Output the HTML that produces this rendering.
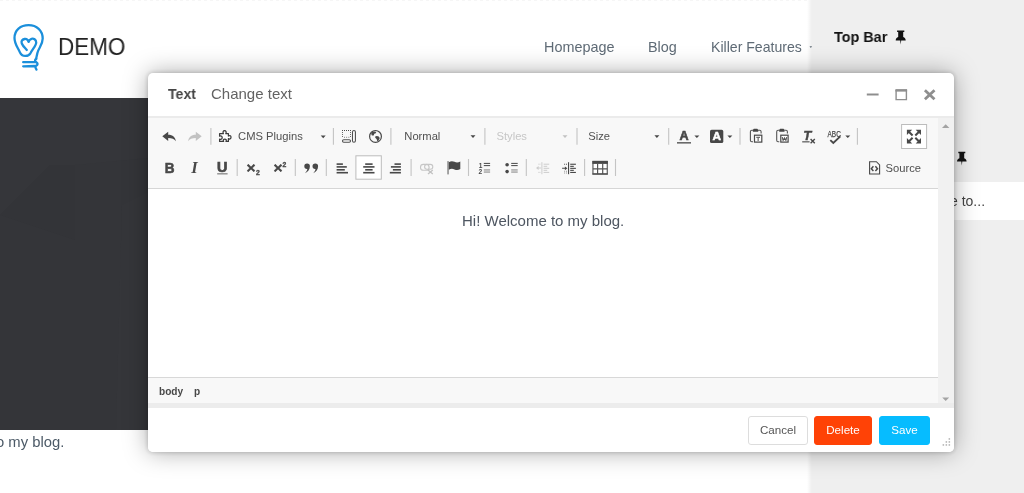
<!DOCTYPE html>
<html lang="en">
<head>
<meta charset="utf-8">
<title>DEMO - Change text</title>
<style>
*{box-sizing:border-box;margin:0;padding:0}
html,body{width:1024px;height:493px;overflow:hidden;background:#fff}
body{position:relative;font-family:"Liberation Sans",sans-serif;color:#333}
.abs{position:absolute}
#ov,.t,.btn{will-change:transform}
.t{position:absolute;white-space:nowrap;line-height:1;transform-origin:0 0}
/* page behind */
#hero{left:0;top:98px;width:811px;height:332px;background:#343539}
#side{left:811.500px;top:0;width:212.500px;height:493px;background:#efefef}
#sideshadow{left:807px;top:0;width:4.500px;height:493px;background:linear-gradient(to right,rgba(0,0,0,0),rgba(0,0,0,.065))}
#siderow{left:811.500px;top:182px;width:212.500px;height:38px;background:#fff}
.nav{font-size:14px;color:#5f6b76}
/* modal */
#modal{left:148px;top:73px;width:806px;height:379px;background:#fff;border-radius:5px;box-shadow:0 0 5px rgba(0,0,0,.22),0 0 24px rgba(0,0,0,.34)}
#mhead{left:0;top:0;width:806px;height:45px;border-bottom:2px solid #ebebeb}
#tb{left:0;top:45px;width:790px;height:71px;background:#f8f8f8;border-bottom:1.400px solid #d6d6d6}
#sb{left:790px;top:45px;width:16px;height:290.400px;background:#f1f1f1}
#path{left:0;top:304px;width:790px;height:26.4px;background:#f8f8f8;border-top:1px solid #d8d8d8}
#strip{left:0;top:330.400px;width:806px;height:5px;background:#ececec}
#mfoot{left:0;top:335.400px;width:806px;height:43.600px;border-top:0 solid #ddd;background:#fff;border-radius:0 0 5px 5px}
.sep{position:absolute;width:1px;height:16px;background:#bcbcbc}
.btn{position:absolute;height:28.500px;top:7.300px;border-radius:3px;font-size:11.6px;line-height:26.5px;text-align:center}
.cb{font-size:12px;color:#484848}
.ic{position:absolute;width:16px;height:16px;overflow:visible}
.arr{position:absolute;width:0;height:0;border-left:3px solid transparent;border-right:3px solid transparent;border-top:3px solid #484848}
</style>
</head>
<body>
<!-- page header -->
<div class="t" id="demo" style="left:58.400px;top:35px;font-size:24px;color:#222;transform:scaleX(.937)">DEMO</div>
<div class="t nav" id="n1" style="left:544.200px;top:39.800px;font-size:14.400px">Homepage</div>
<div class="t nav" id="n2" style="left:647.700px;top:39.800px;font-size:14.400px">Blog</div>
<div class="t nav" id="n3" style="left:710.800px;top:40px;font-size:14.100px">Killer Features</div>
<div class="abs" id="topdash" style="left:0;top:0;width:808px;height:1px;background:repeating-linear-gradient(to right,#f6f6f6 0 3px,#fff 3px 6px)"></div>
<div class="abs" id="hero"><svg width="811" height="332" viewBox="0 98 811 332" style="display:block"><path d="M0 98H148V158L75 165L50 165L0 215Z" fill="#35363a"/><path d="M50 165H75V240L0 215Z" fill="#333438"/><path d="M122 205L148 192V430H116Z" fill="#35363a"/></svg></div>
<div class="t" id="under" style="left:-3.9px;top:434.5px;font-size:14.8px;color:#4c5a67">o my blog.</div>

<!-- sidebar -->
<div class="abs" id="sideshadow"></div>
<div class="abs" id="side"></div>
<div class="abs" id="siderow"></div>
<div class="t" id="topbar" style="left:834px;top:28.500px;font-size:15px;transform:scaleX(.96);font-weight:bold;color:#111">Top Bar</div>
<div class="t" id="eto" style="left:950px;top:194px;font-size:14px;color:#444">e to...</div>

<!-- modal -->
<div class="abs" id="modal">
 <div class="abs" id="mhead"></div>
 <div class="t" id="mt1" style="left:20px;top:13px;font-size:15px;transform:scaleX(.94);font-weight:bold;color:#454545">Text</div>
 <div class="t" id="mt2" style="left:63px;top:13px;font-size:15px;color:#636363">Change text</div>
 <div class="abs" id="tb"></div>
 <div class="abs" id="sb"></div>
 <div class="t" id="hi" style="left:313.500px;top:139.600px;font-size:15px;color:#4e5661">Hi! Welcome to my blog.</div>
 <div class="abs" id="path"></div>
 <div class="abs" id="strip"></div>
 <div class="t" id="pb" style="left:11px;top:313.800px;font-size:10.1px;font-weight:bold;color:#484848">body</div>
 <div class="t" id="pp" style="left:45.600px;top:313.800px;font-size:10.1px;font-weight:bold;color:#484848">p</div>
 <div class="abs" id="mfoot">
  <div class="btn" id="bcancel" style="left:600px;width:60px;border:1px solid #ddd;color:#555;background:#fff">Cancel</div>
  <div class="btn" id="bdelete" style="left:666px;width:58px;background:#ff4206;color:#fff;border:1px solid #ff4206">Delete</div>
  <div class="btn" id="bsave" style="left:731px;width:51px;background:#06bcff;color:#fff;border:1px solid #06bcff">Save</div>
 </div>
</div>

<!-- icon overlay in page coordinates -->
<svg class="abs" id="ov" style="left:0;top:0" width="1024" height="493" viewBox="0 0 1024 493" font-family="Liberation Sans, sans-serif">
<g id="logo" fill="none" stroke="#1b8fdb" stroke-width="2.300" stroke-linecap="round" stroke-linejoin="round">
 <path d="M36.200 58.800C36.400 57 36.900 55.500 37.400 53C38.500 48 42.700 45 42.700 38.600C42.700 30.500 36.700 25.100 28.600 25.100C20.500 25.100 14.500 30 14.500 38C14.500 44 17.800 47.500 19.800 52.100C21 55 23.500 56 25.600 55.900C28 55.800 29.500 54.800 30.400 53.300C33 48.500 36.200 45.500 36.200 42.500C36.200 39.500 33.500 38 31.500 38.800C29.800 39.400 29 40.500 28.600 41.800C28 40 26.500 38.600 24.500 39C22 39.500 21 41.500 21.800 43.500C22.800 46 25 48 26.800 50"/>
 <path d="M23.200 62.100L35.500 61.800M23.200 66.300L34.500 66M36.200 58.800C34.500 60 34.800 61.200 36.300 62.200C38 63.300 38 64.800 36.300 65.600C35 66.300 35.200 67.500 36.500 69.600"/>
</g>
<g id="pins" fill="#111">
 <path d="M897.1 30.4h7.2v1.6h-1.1v5c1.5.6 2.5 1.8 2.5 3.4h-10c0-1.6 1-2.8 2.5-3.4v-5h-1.1zM900.2 40.4h1l-.5 4z"/>
 <path d="M958.3 151.7h7v1.6h-1.1v5c1.5.6 2.4 1.7 2.4 3.3h-9.6c0-1.6.9-2.7 2.4-3.3v-5h-1.1zM961.3 161.6h1l-.5 3.8z"/>
</g>
<path id="navcaret" d="M809.5 46.3h2.6l-1.3 1.6z" fill="#5f6b76"/>
<g id="winbtns" fill="none" stroke="#8e8e8e">
 <path d="M866.800 94.500h11.800" stroke-width="2"/>
 <path d="M896.100 90.600h10.300v9h-10.300z" stroke-width="1.400"/><path d="M895.400 90.300h11.700" stroke-width="2.400"/>
 <path d="M924.900 90.300l9.600 9M934.500 90.300l-9.600 9" stroke-width="2.800"/>
</g>
<g id="seps" stroke="#c4c4c4" stroke-width="1.1">
 <path d="M210.9 128v16.7M333.4 128v16.7M390.9 128v16.7M484.9 128v16.7M577 128v16.7M668.7 128v16.7M740 128v16.7M857.4 128v16.7"/>
 <path d="M237.2 159v16.9M295.3 159v16.9M326.3 159v16.9M411.1 159v16.9M468.5 159v16.9M526.3 159v16.9M584.6 159v16.9M615.5 159v16.9"/>
</g>
<g id="row1" fill="#484848">
 <path id="undo" d="M162.300 136.300l5.900-4.600v3c4.600 0 7.200 2.400 7.600 6.500c-1.500-2.200-3.800-3.200-7.600-3.200v2.900z"/>
 <path id="redo" fill="#c2c2c2" d="M201.700 136.300l-5.900-4.600v3c-4.600 0-7.200 2.400-7.600 6.500c1.500-2.200 3.800-3.200 7.600-3.200v2.900z"/>
 <path id="puzzle" fill="#fff" stroke="#3c3c3c" stroke-width="1.250" stroke-linejoin="round" d="M219.600 133.700h3.800c-.9-2-.1-3.100 1.200-3.100s2.100 1.100 1.200 3.100h2.600v2.300c1.700-1 2.600 0 2.600 1.300s-.9 2.300-2.600 1.300v2.800h-2.400c.8-1.600 0-2.400-1.200-2.400s-2 .8-1.200 2.400h-4v-2.400c1.800.8 2.600-.2 2.600-1.400s-.8-2.200-2.600-1.400z"/>
 <g id="blocks" fill="none" stroke="#4e4e4e" stroke-width="1">
  <path d="M342 130.500h9" stroke-dasharray="1 1"/>
  <path d="M342.500 132v6M350.500 132v6" stroke-dasharray="1 1" stroke="#6a6a6a"/>
  <path d="M344 137.300h5.400" stroke-dasharray=".9 1.300" stroke="#777"/>
  <rect x="342.500" y="139.800" width="8" height="2.500" rx="1.250" fill="#fff" stroke-width="1.100"/>
  <rect x="352.500" y="130.500" width="2.900" height="11.700" rx="1.450" fill="#fff" stroke-width="1.100"/>
 </g>
 <g id="globe"><circle cx="375.500" cy="136.400" r="5.900" fill="none" stroke="#484848" stroke-width="1.200"/>
  <path d="M372.300 131.800l3.200-.4l.8 1.600l-2 .8l-.6 1.800l-1.800-.2l-.8-1.600zM375.600 136l2.800.2l1.400 1.800l-1.200 2.600l-1.200 .8l-.8-2.400l-1.400-1.200z"/></g>
 <g id="arrows"><path d="M320.700 135.600h5l-2.500 2.600zM470.500 135.300h5l-2.500 2.600zM654.400 135.300h5l-2.500 2.600zM694.400 135.400h5l-2.500 2.600zM727.400 135.400h5l-2.500 2.600zM845.300 135.400h5l-2.500 2.600z"/><path fill="#c2c2c2" d="M562.500 135.300h5l-2.500 2.600z"/></g>
 <text x="404.300" y="139.900" font-size="11.200" fill="#505050">Normal</text>
 <text x="496.500" y="139.900" font-size="11.200" fill="#c6c6c6">Styles</text>
 <text x="588.200" y="139.900" font-size="11.200" fill="#505050">Size</text>
 <text x="238.100" y="139.900" font-size="11.200" fill="#505050">CMS Plugins</text>
 <text x="679.500" y="140" font-size="12.600" font-weight="bold" stroke="#484848" stroke-width=".600">A</text>
 <rect x="677" y="142.200" width="14" height="1.300"/>
 <rect x="710" y="129.800" width="13.300" height="13.200" rx="1.600"/>
 <text x="712.400" y="140.400" font-size="11.800" font-weight="bold" fill="#fff" stroke="#fff" stroke-width=".500">A</text>
 <g id="ptext" fill="none" stroke="#484848" stroke-width="1">
  <path d="M753 141.700h-1.200c-.8 0-1.400-.6-1.400-1.400v-8.600c0-.8.600-1.400 1.400-1.400h1.400M758 130.300h1.700c.8 0 1.400.6 1.400 1.400v1.800" stroke="#555" stroke-width="1.100"/>
  <path d="M752.900 131.800v-1.400c0-.9.700-1.600 1.600-1.600h2.100c.9 0 1.600.7 1.600 1.600v1.400z" fill="#484848" stroke="none"/>
  <rect x="754.5" y="135.200" width="7.300" height="6.900" fill="#fff" stroke-width="1.200"/>
  <path d="M756.300 137.300h3.700M758.150 137.300v3.700" stroke="#6e6e6e" stroke-width="1.250"/>
 </g>
 <g id="pword" fill="none" stroke="#484848" stroke-width="1">
  <path d="M779.3 141.700h-1.200c-.8 0-1.400-.6-1.400-1.400v-8.600c0-.8.600-1.400 1.400-1.400h1.400M784.3 130.300h1.700c.8 0 1.400.6 1.400 1.400v1.800" stroke="#555" stroke-width="1.100"/>
  <path d="M779.200 131.800v-1.400c0-.9.700-1.600 1.600-1.600h2.100c.9 0 1.600.7 1.600 1.600v1.400z" fill="#484848" stroke="none"/>
  <rect x="780.8" y="135.200" width="7.300" height="6.900" fill="#fff" stroke-width="1.200"/>
  <path d="M782.300 137.200l.8 3.200l1.400-2.500l1.400 2.500l.8-3.200" stroke="#555" stroke-width="1.050"/>
 </g>
 <g id="rmfmt">
  <text x="803.200" y="140.200" font-size="13.200" font-weight="bold" font-style="italic" stroke="#484848" stroke-width=".400">T</text>
  <rect x="802.200" y="141.300" width="7.400" height="1.100"/>
  <path d="M810.600 139l4.200 4.200M814.800 139l-4.200 4.200" stroke="#484848" stroke-width="1.400" fill="none"/>
 </g>
 <g id="spell">
  <text x="827.600" y="136.700" font-size="8.400" textLength="13.200" lengthAdjust="spacingAndGlyphs" stroke="#484848" stroke-width=".250">ABC</text>
  <path d="M830.300 140.100l3 2.800l7-6.500" stroke="#484848" stroke-width="1.900" fill="none"/>
 </g>
 <g id="maxi">
  <rect x="901.600" y="124.500" width="25" height="24" fill="#fff" stroke="#bcbcbc" stroke-width="1"/>
  <path d="M906.900 129.800h5.300l-5.300 5.300zM921 129.800v5.300l-5.300-5.300zM906.900 143.400v-5.300l5.300 5.300zM921 143.400h-5.300l5.300-5.300z"/>
  <path d="M908.600 131.500l4 4M919.300 131.500l-4 4M908.600 141.700l4-4M919.300 141.700l-4-4" stroke="#484848" stroke-width="2" fill="none"/>
 </g>
</g>
<g id="row2" fill="#484848">
 <text x="164.700" y="173" font-size="14.900" font-weight="bold" stroke="#484848" stroke-width=".600" textLength="9.800" lengthAdjust="spacingAndGlyphs">B</text>
 <text x="191.300" y="173.100" font-size="16.600" font-weight="bold" font-style="italic" font-family="Liberation Serif, serif">I</text>
 <text x="217" y="171.800" font-size="13.800" font-weight="bold" stroke="#484848" stroke-width=".700" textLength="10.400" lengthAdjust="spacingAndGlyphs">U</text>
 <rect x="217.200" y="173.100" width="10.400" height="1.400" fill="#8e8e8e"/>
 <text id="xs1" x="246.600" y="172.700" font-size="15.500" font-weight="bold" stroke="#484848" stroke-width=".450">×</text>
 <text x="255.900" y="174.500" font-size="6.800" font-weight="bold" stroke="#484848" stroke-width=".350">2</text>
 <text id="xs2" x="273.400" y="173.400" font-size="15.500" font-weight="bold" stroke="#484848" stroke-width=".450">×</text>
 <text x="282.500" y="166.900" font-size="6.800" font-weight="bold" stroke="#484848" stroke-width=".350">2</text>
 <path id="quote" d="M304.300 166.300a2.800 2.800 0 1 1 5.600 0c0 3.200-2 5.600-4.900 6.900c1.500-1.500 2.200-2.900 2.300-4.200a2.800 2.800 0 0 1-3-2.700zM312.500 166.300a2.800 2.800 0 1 1 5.600 0c0 3.200-2 5.600-4.900 6.900c1.500-1.500 2.200-2.900 2.300-4.200a2.800 2.800 0 0 1-3-2.700z"/>
 <g id="aleft"><rect x="336.600" y="163.300" width="6.300" height="1.600"/><rect x="336.600" y="166.100" width="10.200" height="1.600"/><rect x="336.600" y="169" width="8.200" height="1.600"/><rect x="336.600" y="171.900" width="11.400" height="1.600"/></g>
 <rect x="355.900" y="155.800" width="25.400" height="23.400" fill="#fff" stroke="#bcbcbc" stroke-width="1"/>
 <g id="acenter"><rect x="365.200" y="163.300" width="7.400" height="1.600"/><rect x="363.200" y="166.100" width="11.300" height="1.600"/><rect x="365.200" y="169" width="7.400" height="1.600"/><rect x="363.200" y="171.900" width="11.300" height="1.600"/></g>
 <g id="aright"><rect x="394.500" y="163.300" width="6.400" height="1.600"/><rect x="390.900" y="166.100" width="10" height="1.600"/><rect x="392.900" y="169" width="8" height="1.600"/><rect x="389.800" y="171.900" width="11.100" height="1.600"/></g>
 <g id="unlink" fill="none" stroke="#c6c6c6" stroke-width="1.100">
  <rect x="420.500" y="164.400" width="8.600" height="5.900" rx="2.900"/><rect x="424.600" y="164.400" width="8.200" height="4.800" rx="2.400"/>
  <path d="M428 169.900l4.800 4.200M432.800 169.900l-4.800 4.200" stroke-width="1.300" stroke="#c2c2c2"/>
 </g>
 <g id="anchor"><rect x="447.100" y="161.100" width="1.900" height="13.300" fill="#a0a0a0"/>
  <path d="M448.800 162.200c2-1.300 3.800-1.300 5.700-.4s3.800 .9 5.800-.4v7.600c-2 1.300-3.800 1.300-5.800 .4s-3.700-.9-5.700 .4z"/></g>
 <g id="olist"><text x="478.700" y="167.500" font-size="6.600" font-weight="bold">1</text><text x="478.500" y="174.300" font-size="6.600" font-weight="bold">2</text>
  <rect x="483.800" y="162.900" width="6.300" height="1"/><rect x="483.800" y="165.100" width="6.300" height="1"/><rect x="483.800" y="169.400" width="6.300" height="1.100" fill="#8c8c8c"/><rect x="483.800" y="171.500" width="6.300" height="1.100" fill="#8c8c8c"/></g>
 <g id="ulist"><circle cx="507.100" cy="164.700" r="1.800"/><circle cx="507.100" cy="171.600" r="1.800"/>
  <rect x="511.200" y="162.900" width="6.500" height="1"/><rect x="511.200" y="165.100" width="6.500" height="1"/><rect x="511.200" y="169.400" width="6.500" height="1.100" fill="#8c8c8c"/><rect x="511.200" y="171.500" width="6.500" height="1.100" fill="#8c8c8c"/></g>
 <g id="outdent" fill="#cdcdcd"><rect x="541.400" y="162.200" width="1" height="12"/>
  <path d="M536 168.100l2.600-2v1.500h2.300v1h-2.300v1.500z"/>
  <rect x="543.600" y="163.700" width="5.600" height="1"/><rect x="543.600" y="165.800" width="3.600" height="1"/><rect x="543.600" y="167.800" width="5.600" height="1"/><rect x="543.600" y="169.800" width="3.600" height="1"/><rect x="543.600" y="171.900" width="5.600" height="1"/>
  <rect x="538" y="163.700" width="2.600" height="1" opacity=".6"/><rect x="538" y="171.900" width="2.600" height="1" opacity=".6"/></g>
 <g id="indent"><rect x="568" y="162.200" width="1.100" height="12"/>
  <path d="M567.400 168.300l-2.500-1.900v1.400h-2.800v1h2.800v1.400z"/>
  <rect x="570.200" y="163.700" width="5.700" height="1.100"/><rect x="570.200" y="165.800" width="3.600" height="1.100"/><rect x="570.200" y="167.800" width="5.700" height="1.100"/><rect x="570.200" y="169.800" width="3.600" height="1.100"/><rect x="570.200" y="171.900" width="5.700" height="1.100"/>
  <path d="M564.100 163.700h1v1h-1zM566 163.700h1v1h-1z" opacity=".9"/><path d="M564.100 170.800h1v1h-1zM566 170.800h1v1h-1zM564.100 172.400h1v1h-1zM566 172.400h1v1h-1z" opacity=".55"/></g>
 <g id="table"><rect x="592.950" y="161.450" width="14.300" height="12.600" fill="#fff" stroke="#505050" stroke-width="1.100"/>
  <rect x="592.400" y="160.900" width="15.400" height="3"/>
  <path d="M597.600 163v11M602.700 163v11M592.900 168.800h14.400" stroke="#555" stroke-width="1.200" fill="none"/><rect x="592.400" y="173.300" width="15.400" height="1.300" fill="#505050"/></g>
 <g id="source"><path d="M869.600 161.700h6.800l3.200 3.200v9.100h-10z" fill="none" stroke="#484848" stroke-width="1.100"/>
  <path d="M873.400 166.300l-2.100 2.400l2.100 2.400M875.400 166.300l2.100 2.400l-2.100 2.400" fill="none" stroke="#484848" stroke-width="1.450"/>
  <text x="885.500" y="171.600" font-size="11.200" fill="#505050">Source</text></g>
</g>
<g id="scroll" fill="#a3a3a3"><path d="M942 128l3.700-3.700l3.700 3.700zM942.200 397.500l3.500 3.500l3.500-3.500z"/></g>
<g id="grip" fill="#b0b0b0"><rect x="948.600" y="438.200" width="1.500" height="1.500"/><rect x="945.600" y="441.200" width="1.500" height="1.500"/><rect x="948.600" y="441.200" width="1.500" height="1.500"/><rect x="942.600" y="444.200" width="1.500" height="1.500"/><rect x="945.600" y="444.200" width="1.500" height="1.500"/><rect x="948.600" y="444.200" width="1.500" height="1.500"/></g>
</svg>
</body>
</html>
